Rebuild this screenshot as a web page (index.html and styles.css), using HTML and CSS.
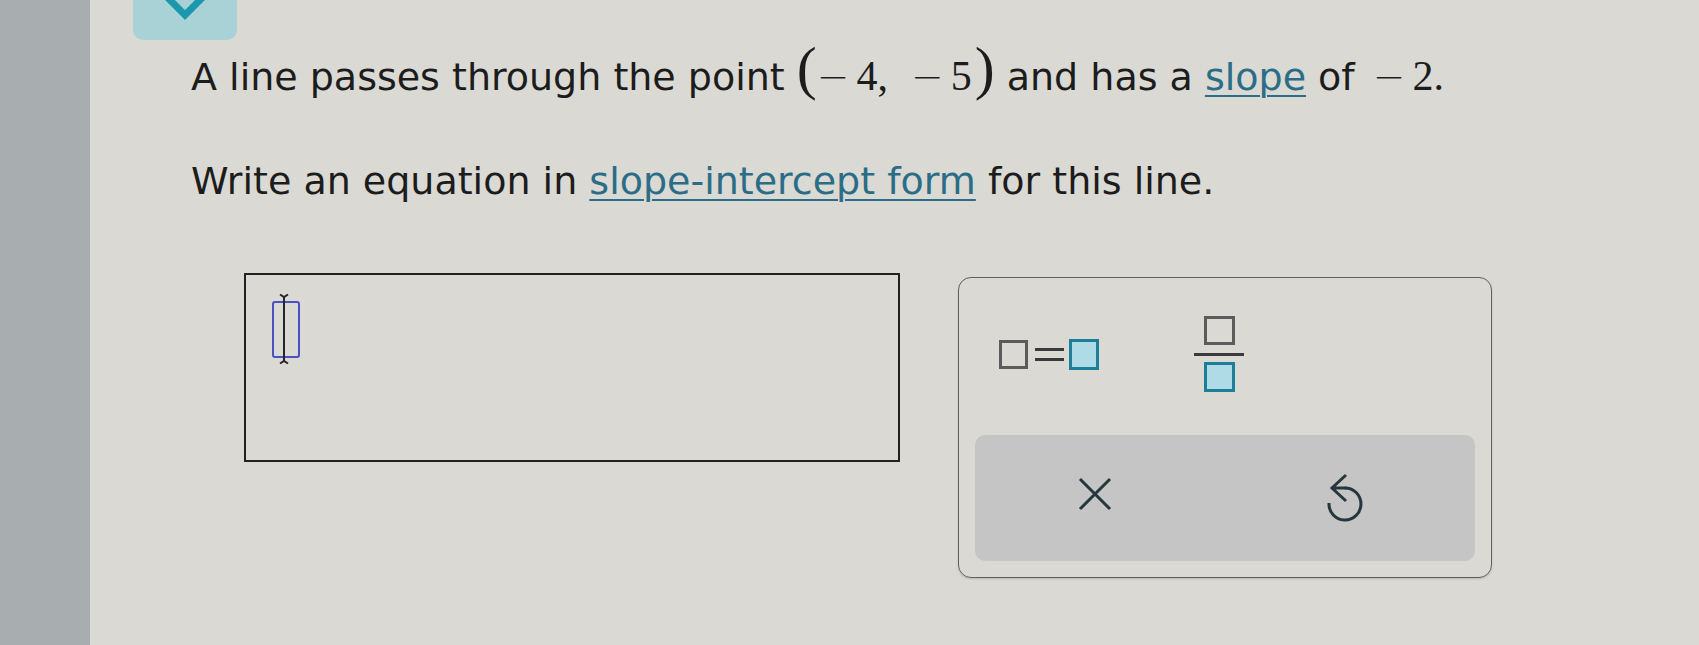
FILE: index.html
```html
<!DOCTYPE html>
<html>
<head>
    <meta charset="UTF-8">
    <title>Slope-intercept form</title>
    <link rel="stylesheet" href="styles.css">
</head>
<body>
<div class="page">
    <aside class="rail"></aside>
    <main class="content">
        <div class="toggle">
            <svg width="104" height="40" viewBox="0 0 104 40"><polyline points="32,-5 52,15 72,-5" fill="none" stroke="#1c98ae" stroke-width="7"/></svg>
        </div>

        <p class="prompt">A line passes through the point <span class="math"><span class="paren">(</span><span class="op">&minus;</span>4,<span class="op gap">&minus;</span>5<span class="paren close">)</span></span> and has a <a class="term" href="#">slope</a> of <span class="math"><span class="op lead">&minus;</span>2.</span></p>
        <p class="prompt">Write an equation in <a class="term" href="#">slope-intercept form</a> for this line.</p>

        <div class="work">
            <div class="answer">
                <!-- empty answer slot with the caret -->
                <svg class="cursor" width="32" height="72" viewBox="0 0 32 72">
                    <rect x="3" y="9" width="26" height="55" rx="2" fill="none" stroke="#4b50c2" stroke-width="2"/>
                    <path d="M14 4 V68 M10 1.5 L14 4 L18 1.5 M10 70.5 L14 68 L18 70.5" fill="none" stroke="#262626" stroke-width="2"/>
                </svg>
            </div>

            <div class="panel">
                <div class="palette">
                    <div class="tool eq">
                        <span class="slot"></span>
                        <span class="equals"></span>
                        <span class="slot filled"></span>
                    </div>
                    <div class="tool frac">
                        <span class="slot"></span>
                        <span class="bar"></span>
                        <span class="slot filled"></span>
                    </div>
                </div>
                <div class="actions">
                    <button class="action" title="Clear">
                        <svg class="clear" width="34" height="34" viewBox="0 0 34 34"><path d="M2 2 L32 32 M32 2 L2 32" stroke="#26363d" stroke-width="3"/></svg>
                    </button>
                    <button class="action" title="Undo">
                        <svg width="50" height="56" viewBox="0 0 50 56">
                            <path d="M25 18 A16 16 0 1 1 9 33" fill="none" stroke="#26363d" stroke-width="3"/>
                            <path d="M26 5 L12 18 L26 31 M12 18 H26" fill="none" stroke="#26363d" stroke-width="3"/>
                        </svg>
                    </button>
                </div>
            </div>
        </div>
    </main>
</div>
</body>
</html>
```

FILE: styles.css
```css
html, body{
    height: 100%;
}

body{
    margin: 0;
    overflow: hidden;
    color: #1c1c1c;
    background: #dad9d4;
    font: 38px "DejaVu Sans", Verdana, sans-serif;
}

.page{
    display: flex;
    height: 100%;
}

.rail{
    flex: none;
    width: 90px;
    background: #a8aeaf;
}

.content{
    flex: 1;
    padding-left: 101px;
}

/* collapsed header tab */
.toggle{
    width: 104px;
    height: 40px;
    margin-left: -58px;
    background: #a9d2d7;
    border-radius: 0 0 10px 10px;
}
.toggle svg{
    display: block;
}

.prompt{
    margin: 13px 0 0;
    line-height: 48px;
    white-space: nowrap;
}
.prompt + .prompt{
    margin-top: 56px;
}

.term{
    color: #2b6d86;
    text-decoration: underline;
    text-decoration-thickness: 2px;
    text-underline-offset: 5px;
}

.math{
    font-family: "Liberation Serif", "Times New Roman", serif;
    font-size: 42px;
    line-height: 1;
}
.paren{
    font-size: 60px;
    line-height: 0;
    vertical-align: 2px;
}
.paren.close{
    margin-left: 3px;
}
/* minus sign, drawn a bit longer than the serif one */
.op{
    font-family: "DejaVu Sans", sans-serif;
    font-size: 39px;
    font-weight: 300;
    margin-right: 7px;
}
.op.gap{
    margin-left: 23px;
}
.op.lead{
    margin-left: 6px;
}

.work{
    display: flex;
    align-items: flex-start;
    gap: 58px;
    margin: 68px 0 0 53px;
}

.answer{
    box-sizing: border-box;
    width: 656px;
    height: 189px;
    padding: 18px 24px;
    border: 2px solid #222;
}
.cursor{
    display: block;
}

.panel{
    box-sizing: border-box;
    width: 534px;
    height: 301px;
    margin-top: 4px;
    padding: 0 16px;
    border: 1.5px solid #606060;
    border-radius: 13px;
    box-shadow: 0 1px 2px rgba(0, 0, 0, 0.15);
}

.palette{
    display: flex;
    align-items: center;
    gap: 95px;
    height: 76px;
    padding: 38px 0 0 24px;
}

.slot{
    display: block;
    box-sizing: border-box;
    width: 29px;
    height: 29px;
    border: 3px solid #5b5b5b;
}
.slot.filled{
    width: 30px;
    height: 31px;
    border-color: #1c7e99;
    background: #afdbe6;
}

.eq{
    display: flex;
    align-items: center;
}
.equals{
    width: 29px;
    height: 7px;
    margin: 0 5px 0 7px;
    border-top: 3px solid #3a3a3a;
    border-bottom: 3px solid #3a3a3a;
}

.frac{
    display: flex;
    flex-direction: column;
    align-items: center;
    width: 50px;
}
.frac .slot{
    width: 31px;
}
.frac .slot.filled{
    height: 30px;
}
.bar{
    display: block;
    width: 50px;
    height: 3px;
    margin: 8px 0 6px;
    background: #3a3a3a;
}

.actions{
    display: grid;
    grid-template-columns: 1fr 1fr;
    height: 126px;
    margin-top: 43px;
    background: #c4c5c4;
    border-radius: 10px;
}

.action{
    display: flex;
    align-items: center;
    justify-content: center;
    padding: 0 10px 0 0;
    border: 0;
    background: none;
}
.action .clear{
    margin-bottom: 8px;
}
```
